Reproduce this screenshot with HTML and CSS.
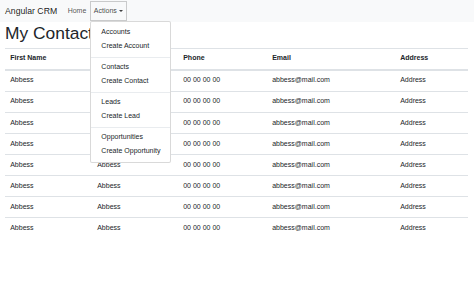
FILE: index.html
```html
<!DOCTYPE html>
<html lang="en">
<head>
    <meta charset="UTF-8">
    <meta name="viewport" content="width=device-width, initial-scale=1.0">
    <title>Angular CRM</title>
    <link rel="stylesheet" href="styles.css">
</head>
<body>
    <!-- 導航列 -->
    <nav class="navbar">
        <a class="brand" href="#">Angular CRM</a>
        <ul class="nav">
            <li><a class="navLink" href="#">Home</a></li>
            <li class="dropdown">
                <a class="navLink toggle" href="#">Actions<span class="caret"></span></a>
                <div class="menu">
                    <a class="item" href="#">Accounts</a>
                    <a class="item" href="#">Create Account</a>
                    <div class="divider"></div>
                    <a class="item" href="#">Contacts</a>
                    <a class="item" href="#">Create Contact</a>
                    <div class="divider"></div>
                    <a class="item" href="#">Leads</a>
                    <a class="item" href="#">Create Lead</a>
                    <div class="divider"></div>
                    <a class="item" href="#">Opportunities</a>
                    <a class="item" href="#">Create Opportunity</a>
                </div>
            </li>
        </ul>
    </nav>

    <!-- 聯絡人列表 -->
    <div class="content">
        <h1>My Contacts</h1>
        <table class="table">
            <colgroup>
                <col style="width: 87px">
                <col style="width: 86px">
                <col style="width: 89px">
                <col style="width: 128px">
                <col>
            </colgroup>
            <thead>
                <tr>
                    <th>First Name</th>
                    <th>Last Name</th>
                    <th>Phone</th>
                    <th>Email</th>
                    <th>Address</th>
                </tr>
            </thead>
            <tbody>
                <tr><td>Abbess</td><td>Abbess</td><td>00 00 00 00</td><td>abbess@mail.com</td><td>Address</td></tr>
                <tr><td>Abbess</td><td>Abbess</td><td>00 00 00 00</td><td>abbess@mail.com</td><td>Address</td></tr>
                <tr><td>Abbess</td><td>Abbess</td><td>00 00 00 00</td><td>abbess@mail.com</td><td>Address</td></tr>
                <tr><td>Abbess</td><td>Abbess</td><td>00 00 00 00</td><td>abbess@mail.com</td><td>Address</td></tr>
                <tr><td>Abbess</td><td>Abbess</td><td>00 00 00 00</td><td>abbess@mail.com</td><td>Address</td></tr>
                <tr><td>Abbess</td><td>Abbess</td><td>00 00 00 00</td><td>abbess@mail.com</td><td>Address</td></tr>
                <tr><td>Abbess</td><td>Abbess</td><td>00 00 00 00</td><td>abbess@mail.com</td><td>Address</td></tr>
                <tr><td>Abbess</td><td>Abbess</td><td>00 00 00 00</td><td>abbess@mail.com</td><td>Address</td></tr>
            </tbody>
        </table>
    </div>
</body>
</html>
```

FILE: styles.css
```css
* {
    margin: 0;
    padding: 0;
    box-sizing: border-box;
}
body {
    font-family: "Liberation Sans", Arial, sans-serif;
    font-size: 7px;
    line-height: 1.5;
    color: #212529;
    background: #fff;
}
a {
    text-decoration: none;
}
ul {
    list-style: none;
}

/* 導航列 */
.navbar {
    height: 22px;
    background-color: #f8f9fa;
    display: flex;
    align-items: center;
    padding-left: 5px;
}
.navbar .brand {
    font-size: 8.7px;
    line-height: 13px;
    color: rgba(0, 0, 0, .9);
    margin-right: 7px;
}
.navbar .nav {
    display: flex;
    align-items: center;
}
.navbar .navLink {
    display: block;
    padding: 0 3.5px;
    line-height: 18px;
    color: rgba(0, 0, 0, .7);
}
.navbar .toggle {
    color: rgba(0, 0, 0, .75);
    border: 1px solid #c9cacb;
    line-height: 18px;
    padding: 0 3.5px 0 3px;
}
.navbar .caret {
    display: inline-block;
    margin-left: 2px;
    vertical-align: 1px;
    border-top: 2.1px solid;
    border-left: 2.1px solid transparent;
    border-right: 2.1px solid transparent;
}
.dropdown {
    position: relative;
}
.dropdown .menu {
    position: absolute;
    top: 19.5px;
    left: 0;
    z-index: 1000;
    width: 81px;
    padding: 4px 0 3.5px;
    background: #fff;
    border: 1px solid rgba(0, 0, 0, .15);
    border-radius: 2px;
}
.dropdown .item {
    display: block;
    padding: 1.75px 10.5px;
    line-height: 10.5px;
    color: #212529;
    white-space: nowrap;
}
.dropdown .divider {
    margin: 3px 0;
    border-top: 1px solid #e9ecef;
}

/* 內容 */
.content {
    padding: 0 6px 0 5px;
}
h1 {
    font-size: 17.4px;
    font-weight: 500;
    line-height: 21px;
    margin-top: 1px;
    margin-bottom: 3.5px;
}
.table {
    width: 100%;
    border-collapse: collapse;
}
.table th,
.table td {
    text-align: left;
    padding: 4.8px 5.2px;
    line-height: 10.5px;
    border-top: 1px solid #dee2e6;
    vertical-align: top;
}
.table th {
    font-weight: bold;
    border-bottom: 2px solid #dee2e6;
}
```
